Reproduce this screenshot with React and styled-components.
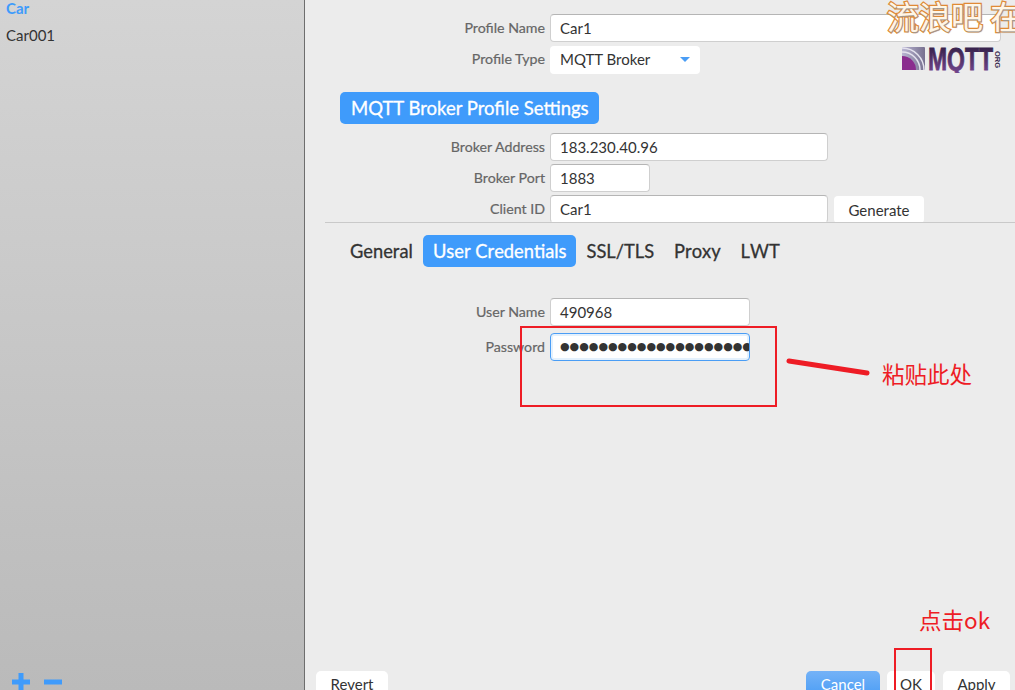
import React from "react";
import styled, { createGlobalStyle } from "styled-components";

const Global = createGlobalStyle`
  html, body { margin: 0; padding: 0; background: #ececec; overflow: hidden; }
  #root { width: 1015px; height: 690px; }
`;

const Page = styled.div`
  position: relative; width: 1015px; height: 690px; overflow: hidden; display: flex;
  font-family: Lato, "Noto Sans CJK SC", sans-serif; color: #333; background: #ececec;
`;
const Sidebar = styled.aside`
  width: 305px; flex: none; box-sizing: border-box; border-right: 1px solid #6e6e6e;
  background: linear-gradient(#d4d4d4, #bababa); display: flex; flex-direction: column; padding: 0 6px;
`;
const SideItem = styled.div`
  font-size: 15px; line-height: 27px; height: 27px; color: ${p => (p.$group ? "#3f9bfb" : "#333")};
  font-weight: ${p => (p.$group ? 700 : 400)};
  margin-top: ${p => (p.$group ? "-5px" : "0")};
`;
const SideTools = styled.div`margin-top: auto; display: flex; gap: 14px; padding: 0 0 0 6px; height: 17px;`;
const Sign = styled.svg`width: 18px; height: 18px; display: block; flex: none;`;
const Main = styled.main`flex: 1; min-width: 0; display: flex; flex-direction: column;`;
const Form = styled.section`padding: 14px 14px 0 20px; display: flex; flex-direction: column;`;
const Row = styled.div`
  display: flex; align-items: flex-start; gap: 5px; height: 28px; margin-bottom: ${p => p.$mb ?? 3}px;
`;
const Label = styled.label`
  width: 220px; flex: none; text-align: right; font-size: 14.2px; line-height: 27px; color: #666; white-space: nowrap;
  -webkit-text-stroke: 0.2px #666;
`;
const Field = styled.div`
  box-sizing: border-box; width: ${p => p.$w}px; height: 28px; background: #fff; border-radius: 4px;
  border: 1px solid #cfcfcf; border-top-color: #b5b5b5; border-bottom-color: ${p => (p.$open ? "transparent" : "#cfcfcf")};
  padding: 0 9px; font-size: 15px; line-height: 27px; color: #333;
  display: flex; justify-content: space-between; align-items: center; overflow: hidden;
  ${p => p.$focus && `border: 1px solid #4a9df5; box-shadow: inset 0 0 0 2px #e4f1fd;`}
`;
const Select = styled(Field)`
  border: 0 solid transparent; padding: 0 10px 2px; margin-top: 1px;
`;
const Caret = styled.span`
  width: 0; height: 0; border-left: 5px solid transparent; border-right: 5px solid transparent; border-top: 5px solid #4a9df5;
`;
const Logo = styled.svg`width: 100px; height: 26px; margin: 2px 0 0 auto; display: block; flex: none;`;
const TopLogoRow = styled(Row)`margin-bottom: 19px;`;
const Heading = styled.h2`
  margin: 0 0 9px 15px; align-self: flex-start; background: #3f9bfb; color: #fff; border-radius: 5px;
  font-size: 18.5px; font-weight: 400; line-height: 32px; height: 32px; padding: 0 10px 0 11px; white-space: nowrap;
  -webkit-text-stroke: 0.3px #fff;
`;
const GenerateButton = styled.button`
  box-sizing: border-box; width: 90px; height: 27px; margin: 1px 0 0 1px; background: #fff; border: 0; border-radius: 4px;
  font: 400 15px/26px Lato, sans-serif; color: #333; padding: 0;
`;
const Tabs = styled.nav`
  box-sizing: border-box; border-top: 1px solid #c9c9c9; display: flex; align-items: flex-start;
  margin: -4px 0 0 20px; height: 45px; padding: 12px 0 0 15px;
`;
const Tab = styled.div`
  font-size: 18.3px; line-height: 32px; height: 32px; padding: 0 10px; border-radius: 5px; white-space: nowrap;
  font-kerning: none;
  background: ${p => (p.$on ? "#3f9bfb" : "transparent")}; color: ${p => (p.$on ? "#fff" : "#333")};
  -webkit-text-stroke: 0.3px ${p => (p.$on ? "#fff" : "#333")};
`;
const Credentials = styled.section`padding: 31px 14px 0 20px; display: flex; flex-direction: column;`;
const Dots = styled.span`
  font-size: 11px; font-family: "DejaVu Sans", sans-serif; line-height: 26px; white-space: nowrap;
`;
const Footer = styled.footer`
  margin-top: auto; height: 19px; display: flex; padding: 0 5px 0 11px;
`;
const FootButton = styled.button`
  box-sizing: border-box; width: ${p => p.$w}px; height: 26px; flex: none; border: 0; border-radius: 5px; padding: 0;
  margin-left: ${p => p.$ml || 0};
  background: ${p => (p.$primary ? "linear-gradient(#74b2f7, #4a9df5)" : "#fff")};
  color: ${p => (p.$primary ? "#fff" : "#333")}; font: 400 15px/26px Lato, sans-serif;
`;
const RedBox = styled.div`
  position: absolute; box-sizing: border-box; border: 2px solid #ee1c25;
  left: ${p => p.$x}px; top: ${p => p.$y}px; width: ${p => p.$w}px; height: ${p => p.$h}px;
`;
const Note = styled.div`
  position: absolute; left: ${p => p.$x}px; top: ${p => p.$y}px; color: #ee1c25; white-space: nowrap;
  font: 400 22.5px/30px "Noto Sans CJK SC", sans-serif;
`;
const Arrow = styled.svg`position: absolute; left: 780px; top: 350px; width: 95px; height: 30px;`;
const Watermark = styled.div`
  position: absolute; left: 887px; top: -4px; white-space: nowrap; color: #fff6e6;
  font: 400 32px/38px "Noto Sans CJK SC", sans-serif;
  -webkit-text-stroke: 2.5px #e08a35; paint-order: stroke fill; text-shadow: 1px 1px 1px #999;
`;

export default function App() {
  return (
    <Page>
      <Global />
      <Sidebar>
        <SideItem $group>Car</SideItem>
        <SideItem>Car001</SideItem>
        <SideTools>
          <Sign viewBox="0 0 18 18"><path d="M9 0v18M0 9h18" stroke="#3f9bfb" strokeWidth="5" /></Sign>
          <Sign viewBox="0 0 18 18"><path d="M0 9h18" stroke="#3f9bfb" strokeWidth="5" /></Sign>
        </SideTools>
      </Sidebar>
      <Main>
        <Form>
          <Row><Label>Profile Name</Label><Field $w={451}>Car1</Field></Row>
          <TopLogoRow>
            <Label>Profile Type</Label>
            <Select $w={150}>MQTT Broker<Caret /></Select>
            <Logo viewBox="0 0 100 26">
              <defs>
                <linearGradient id="mq" x1="0" y1="0" x2="0" y2="1">
                  <stop offset="0" stopColor="#2a1a3c" /><stop offset="1" stopColor="#7a4a96" />
                </linearGradient>
                <linearGradient id="bg" x1="0" y1="0" x2="1" y2="0">
                  <stop offset="0" stopColor="#b9b5d2" /><stop offset="1" stopColor="#77708f" />
                </linearGradient>
              </defs>
              <rect x="1" y="0" width="23" height="23" rx="1" fill="url(#bg)" />
              <path d="M1 23v-14a14 14 0 0 1 14 14z" fill="#8a2c8e" />
              <path d="M1 5a18 18 0 0 1 18 18M1 1a22 22 0 0 1 22 22" stroke="#e4e2ee" strokeWidth="1.5" fill="none" />
              <text x="27" y="22.5" fontFamily="Liberation Sans, sans-serif" fontSize="31" fontWeight="700" fill="url(#mq)" stroke="url(#mq)" strokeWidth="0.8" textLength="65" lengthAdjust="spacingAndGlyphs">MQTT</text>
              <text transform="translate(94 4) rotate(90)" fontFamily="Liberation Sans, sans-serif" fontSize="7.5" fontWeight="700" fill="#3a2a50">ORG</text>
            </Logo>
          </TopLogoRow>
          <Heading>MQTT Broker Profile Settings</Heading>
          <Row><Label>Broker Address</Label><Field $w={278}>183.230.40.96</Field></Row>
          <Row><Label>Broker Port</Label><Field $w={100}>1883</Field></Row>
          <Row><Label>Client ID</Label><Field $w={278} $open>Car1</Field><GenerateButton>Generate</GenerateButton></Row>
        </Form>
        <Tabs>
          <Tab>General</Tab>
          <Tab $on>User Credentials</Tab>
          <Tab>SSL/TLS</Tab>
          <Tab>Proxy</Tab>
          <Tab>LWT</Tab>
        </Tabs>
        <Credentials>
          <Row $mb={7}><Label>User Name</Label><Field $w={200}>490968</Field></Row>
          <Row><Label>Password</Label><Field $w={200} $focus><Dots>●●●●●●●●●●●●●●●●●●●●</Dots></Field></Row>
        </Credentials>
        <Footer>
          <FootButton $w={72}>Revert</FootButton>
          <FootButton $w={74} $primary $ml="auto">Cancel</FootButton>
          <FootButton $w={48} $ml="7px">OK</FootButton>
          <FootButton $w={67} $ml="8px">Apply</FootButton>
        </Footer>
      </Main>
      <RedBox $x={520} $y={326} $w={257} $h={81} />
      <RedBox $x={894} $y={648} $w={38} $h={60} />
      <Arrow viewBox="0 0 95 30"><path d="M9 11L87 23" stroke="#ee1c25" strokeWidth="5" strokeLinecap="round" /></Arrow>
      <Note $x={882} $y={358}>粘贴此处</Note>
      <Note $x={919} $y={604}>点击ok</Note>
      <Watermark>流浪吧 在</Watermark>
    </Page>
  );
}
